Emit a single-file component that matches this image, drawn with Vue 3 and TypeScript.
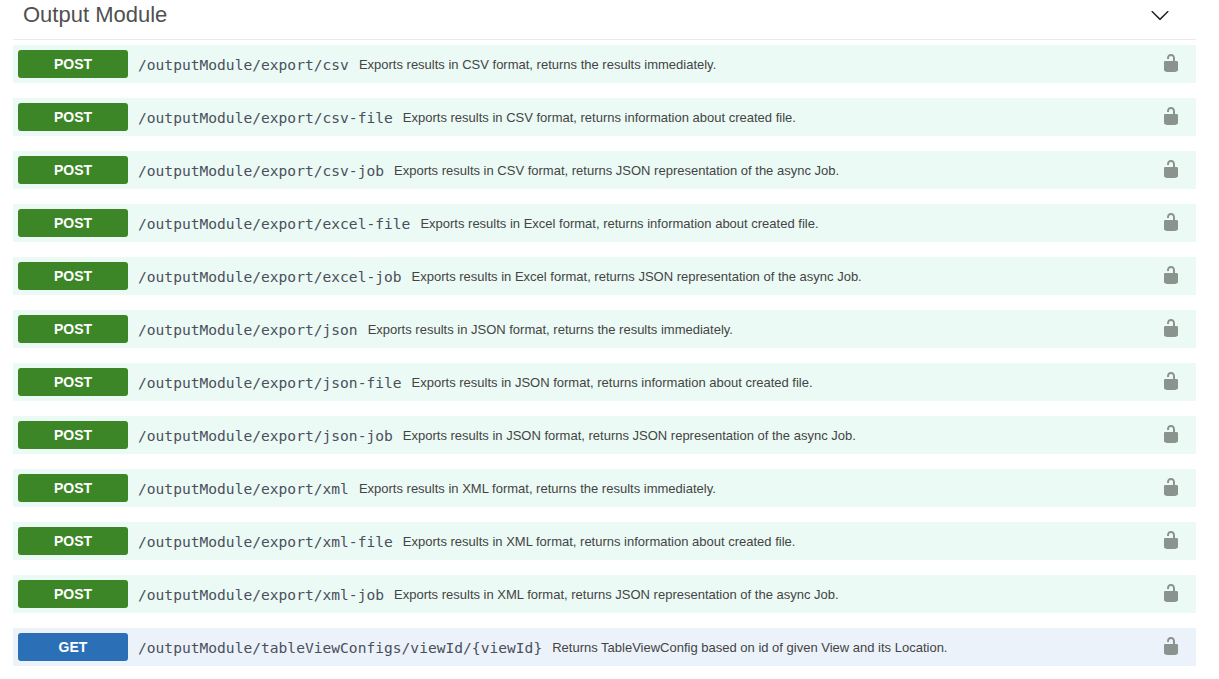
<script setup lang="ts">
interface Endpoint {
  method: 'POST' | 'GET'
  path: string
  summary: string
}

const endpoints: Endpoint[] = [
  { method: 'POST', path: '/outputModule/export/csv', summary: 'Exports results in CSV format, returns the results immediately.' },
  { method: 'POST', path: '/outputModule/export/csv-file', summary: 'Exports results in CSV format, returns information about created file.' },
  { method: 'POST', path: '/outputModule/export/csv-job', summary: 'Exports results in CSV format, returns JSON representation of the async Job.' },
  { method: 'POST', path: '/outputModule/export/excel-file', summary: 'Exports results in Excel format, returns information about created file.' },
  { method: 'POST', path: '/outputModule/export/excel-job', summary: 'Exports results in Excel format, returns JSON representation of the async Job.' },
  { method: 'POST', path: '/outputModule/export/json', summary: 'Exports results in JSON format, returns the results immediately.' },
  { method: 'POST', path: '/outputModule/export/json-file', summary: 'Exports results in JSON format, returns information about created file.' },
  { method: 'POST', path: '/outputModule/export/json-job', summary: 'Exports results in JSON format, returns JSON representation of the async Job.' },
  { method: 'POST', path: '/outputModule/export/xml', summary: 'Exports results in XML format, returns the results immediately.' },
  { method: 'POST', path: '/outputModule/export/xml-file', summary: 'Exports results in XML format, returns information about created file.' },
  { method: 'POST', path: '/outputModule/export/xml-job', summary: 'Exports results in XML format, returns JSON representation of the async Job.' },
  { method: 'GET', path: '/outputModule/tableViewConfigs/viewId/{viewId}', summary: 'Returns TableViewConfig based on id of given View and its Location.' }
]
</script>

<template>
  <div class="page">
    <div class="tag-header">
      <h4 class="tag-title">Output Module</h4>
      <svg class="arrow" viewBox="0 0 20 20" width="20" height="20">
        <path d="M17.418 6.109c.272-.268.709-.268.979 0s.271.701 0 .969l-7.908 7.83c-.27.268-.707.268-.979 0l-7.908-7.83c-.27-.268-.27-.701 0-.969.271-.268.709-.268.979 0L10 13.25l7.418-7.141z" />
      </svg>
    </div>
    <div
      v-for="item in endpoints"
      :key="item.path"
      class="opblock"
      :class="item.method === 'GET' ? 'get' : 'post'"
    >
      <span class="method">{{ item.method }}</span>
      <span class="path">{{ item.path }}</span>
      <span class="summary">{{ item.summary }}</span>
      <svg class="lock" viewBox="0 0 20 20" width="20" height="20">
        <path d="M15.8 8H14V5.6C14 2.703 12.665 1 10 1 7.334 1 6 2.703 6 5.6V6h2v-.801C8 3.754 8.797 3 10 3c1.203 0 2 .754 2 2.199V8H4c-.553 0-1 .646-1 1.199V17c0 .549.428 1.139.951 1.307l1.197.387C5.672 18.861 6.55 19 7.1 19h5.8c.549 0 1.428-.139 1.951-.307l1.196-.387c.524-.167.953-.757.953-1.306V9.199C17 8.646 16.352 8 15.8 8z" />
      </svg>
    </div>
  </div>
</template>

<style scoped>
.page {
  padding: 0 23px 13px 13px;
  font-family: "Liberation Sans", Arial, sans-serif;
  color: #3b4151;
  background: #fff;
}
.tag-header {
  display: flex;
  align-items: center;
  justify-content: space-between;
  height: 40px;
  padding: 0 26px 10px 10px;
  box-sizing: border-box;
  border-bottom: 1px solid #ebebeb;
  margin-bottom: 5px;
}
.tag-title {
  margin: 0;
  font-size: 22px;
  font-weight: 400;
  line-height: 30px;
  color: #505050;
}
.arrow {
  fill: #222;
}
.opblock {
  display: flex;
  align-items: center;
  height: 38px;
  padding: 0 15px 0 5px;
  box-sizing: border-box;
  margin-bottom: 15px;
}
.opblock:last-child {
  margin-bottom: 0;
}
.post {
  background: #ebfaf4;
}
.get {
  background: #ebf2fa;
}
.method {
  width: 110px;
  height: 28px;
  line-height: 29px;
  flex: none;
  border-radius: 3px;
  text-align: center;
  color: #fff;
  font-size: 14px;
  font-weight: 700;
}
.post .method {
  background: #3d8627;
}
.get .method {
  background: #2b70b6;
}
.path {
  margin-left: 10px;
  font-family: "DejaVu Sans Mono", monospace;
  font-size: 14.6px;
  color: #4a4f5c;
  white-space: nowrap;
}
.summary {
  margin-left: 10px;
  flex: 1;
  font-size: 13px;
  color: #444;
  white-space: nowrap;
}
.lock {
  flex: none;
  margin-top: -2px;
  fill: #8a938e;
}
</style>
